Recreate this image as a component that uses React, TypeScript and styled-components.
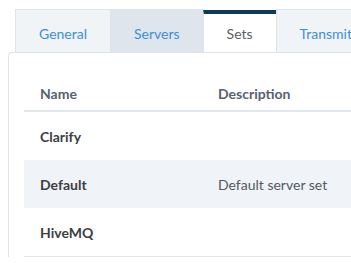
import styled, { createGlobalStyle } from 'styled-components';

const GlobalStyle = createGlobalStyle`
  html, body {
    margin: 0;
    padding: 0;
    background: #ffffff;
    overflow: hidden;
  }
  body {
    font-family: Lato, "Liberation Sans", sans-serif;
  }
`;

const Page = styled.div`
  width: 351px;
  height: 263px;
  padding: 9px 0 0 8px;
  box-sizing: border-box;
  overflow: hidden;
`;

const TabBar = styled.div`
  display: flex;
  align-items: flex-end;
  margin-left: 7px;
  white-space: nowrap;
`;

const Tab = styled.div<{ $state?: 'active' | 'hover' }>`
  flex: none;
  height: ${p => (p.$state === 'active' ? '42px' : '43px')};
  box-sizing: border-box;
  padding: ${p => (p.$state === 'active' ? '0 23px' : '4px 23px 0')};
  display: flex;
  align-items: center;
  font-size: 14px;
  border-top: ${p => (p.$state === 'active' ? '4px solid #0b3a5d' : '1px solid #dfe4ea')};
  border-left: 1px solid #dfe4ea;
  background: ${p =>
    p.$state === 'active' ? '#ffffff' : p.$state === 'hover' ? '#dee5ec' : '#f0f4f7'};
  color: ${p => (p.$state === 'active' ? '#585e66' : '#3c8fdb')};
`;

const Panel = styled.div`
  border-top: 1px solid #dfe4ea;
  border-left: 1px solid #dfe4ea;
  border-top-left-radius: 4px;
  padding: 9px 0 0 15px;
  width: 420px;
`;

const Table = styled.table`
  border-collapse: collapse;
  table-layout: fixed;
  width: 420px;
  font-size: 14px;
  border-bottom: 1px solid #e1e6ec;
`;

const HeadCell = styled.th<{ $w?: number }>`
  width: ${p => (p.$w ? `${p.$w}px` : 'auto')};
  text-align: left;
  padding: 16px 16px 0;
  height: 48px;
  box-sizing: border-box;
  line-height: 32px;
  font-weight: 700;
  color: #58616e;
  border-bottom: 2px solid #e1e6ec;
`;

const Row = styled.tr<{ $shaded?: boolean }>`
  background: ${p => (p.$shaded ? '#f0f3f7' : 'transparent')};
`;

const NameCell = styled.td`
  height: 48px;
  padding: 0 16px;
  font-weight: 700;
  color: #3b3e43;
`;

const DescCell = styled.td`
  height: 48px;
  padding: 0 16px;
  color: #55595f;
`;

const sets = [
  { name: 'Clarify', description: '' },
  { name: 'Default', description: 'Default server set' },
  { name: 'HiveMQ', description: '' },
];

export default function App() {
  return (
    <Page>
      <GlobalStyle />
      <TabBar>
        <Tab>General</Tab>
        <Tab $state="hover">Servers</Tab>
        <Tab $state="active">Sets</Tab>
        <Tab>Transmitters</Tab>
      </TabBar>
      <Panel>
        <Table>
          <thead>
            <tr>
              <HeadCell $w={178}>Name</HeadCell>
              <HeadCell>Description</HeadCell>
            </tr>
          </thead>
          <tbody>
            {sets.map((s, i) => (
              <Row key={s.name} $shaded={i === 1}>
                <NameCell>{s.name}</NameCell>
                <DescCell>{s.description}</DescCell>
              </Row>
            ))}
          </tbody>
        </Table>
      </Panel>
    </Page>
  );
}
